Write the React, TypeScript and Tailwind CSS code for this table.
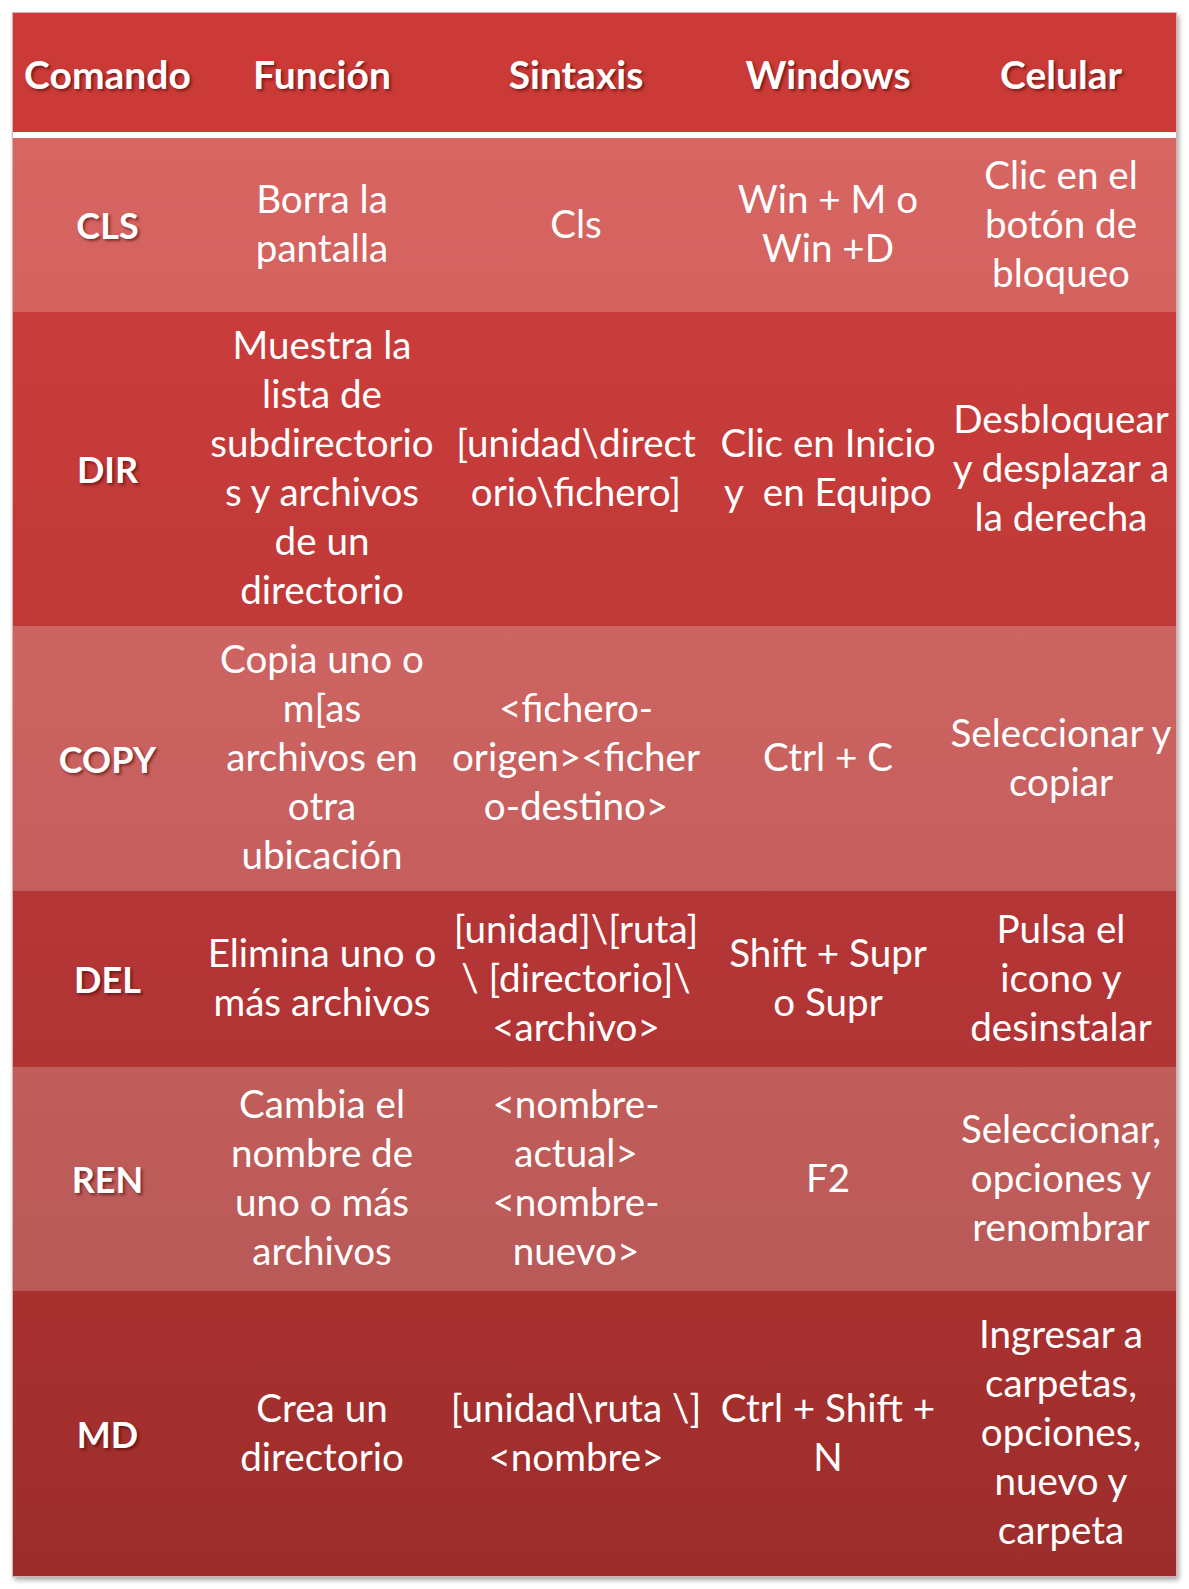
const rows = [
  {
    cmd: "CLS",
    h: "h-[174px]",
    bg: "bg-gradient-to-b from-[#d76663] to-[#d4625f]",
    cells: [
      ["Borra la", "pantalla"],
      ["Cls"],
      ["Win + M o", "Win +D"],
      ["Clic en el", "botón de", "bloqueo"],
    ],
  },
  {
    cmd: "DIR",
    h: "h-[314px]",
    bg: "bg-gradient-to-b from-[#c93c3b] to-[#c03a38]",
    cells: [
      ["Muestra la", "lista de", "subdirectorio", "s y archivos", "de un", "directorio"],
      ["[unidad\\direct", "orio\\fichero]"],
      ["Clic en Inicio", "y  en Equipo"],
      ["Desbloquear", "y desplazar a", "la derecha"],
    ],
  },
  {
    cmd: "COPY",
    h: "h-[265px]",
    bg: "bg-gradient-to-b from-[#cd6461] to-[#c55f5d]",
    cells: [
      ["Copia uno o", "m[as", "archivos en", "otra", "ubicación"],
      ["<fichero-", "origen><ficher", "o-destino>"],
      ["Ctrl + C"],
      ["Seleccionar y", "copiar"],
    ],
  },
  {
    cmd: "DEL",
    h: "h-[176px]",
    bg: "bg-gradient-to-b from-[#b53636] to-[#b13434]",
    cells: [
      ["Elimina uno o", "más archivos"],
      ["[unidad]\\[ruta]", "\\ [directorio]\\", "<archivo>"],
      ["Shift + Supr", "o Supr"],
      ["Pulsa el", "icono y", "desinstalar"],
    ],
  },
  {
    cmd: "REN",
    h: "h-[224px]",
    bg: "bg-gradient-to-b from-[#c15d5b] to-[#b95a58]",
    cells: [
      ["Cambia el", "nombre de", "uno o más", "archivos"],
      ["<nombre-", "actual>", "<nombre-", "nuevo>"],
      ["F2"],
      ["Seleccionar,", "opciones y", "renombrar"],
    ],
  },
  {
    cmd: "MD",
    h: "h-[285px]",
    bg: "bg-gradient-to-b from-[#a8312f] to-[#9c2d2c]",
    cells: [
      ["Crea un", "directorio"],
      ["[unidad\\ruta \\]", "<nombre>"],
      ["Ctrl + Shift +", "N"],
      ["Ingresar a", "carpetas,", "opciones,", "nuevo y", "carpeta"],
    ],
  },
];

const headers = ["Comando", "Función", "Sintaxis", "Windows", "Celular"];

const shadowText = "font-bold [text-shadow:2px_2px_3px_rgba(60,0,0,0.55)]";

function Cell({ lines }: { lines: string[] }) {
  return (
    <div className="flex flex-col items-center justify-center pb-[4px] overflow-visible">
      {lines.map((l, i) => (
        <span key={i} className="whitespace-pre leading-[49px]">
          {l}
        </span>
      ))}
    </div>
  );
}

export default function App() {
  return (
    <div
      className="w-[1189px] h-[1589px] bg-white pt-3 pl-3 text-white text-[38.6px]"
      style={{ fontFamily: "Lato, 'Open Sans', sans-serif" }}
    >
      <div className="w-[1165px] border border-[#dbb0af] shadow-[2px_3px_5px_rgba(0,0,0,0.35)]">
        <div className="grid grid-cols-[189px_240px_268px_236px_230px] h-[119px] bg-[#cb3a37] border-b-[6px] border-white box-content">
          {headers.map((h) => (
            <div key={h} className={`flex items-center justify-center pt-1 text-[39px] ${shadowText}`}>
              {h}
            </div>
          ))}
        </div>
        {rows.map((r) => (
          <div key={r.cmd} className={`grid grid-cols-[189px_240px_268px_236px_230px] ${r.h} ${r.bg}`}>
            <div className={`flex items-center justify-center text-[36px] ${shadowText}`}>{r.cmd}</div>
            {r.cells.map((c, i) => (
              <Cell key={i} lines={c} />
            ))}
          </div>
        ))}
      </div>
    </div>
  );
}
